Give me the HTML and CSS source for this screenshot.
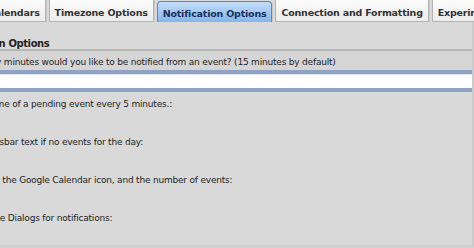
FILE: index.html
```html
<!DOCTYPE html>
<html>
<head>
  <meta charset="UTF-8">
  <title>Notification Options</title>
  <link rel="stylesheet" href="styles.css">
</head>
<body>
  <div class="prefs">
    <ul class="tabs">
      <li class="tab">Calendars</li>
      <li class="tab">Timezone Options</li>
      <li class="tab active">Notification Options</li>
      <li class="tab">Connection and Formatting</li>
      <li class="tab">Experimental</li>
    </ul>

    <div class="pane">
      <h2 class="pane_title">Notification Options</h2>

      <div class="question"><span class="question_text">How many minutes would you like to be notified from an event? (15 minutes by default)</span></div>
      <div class="field"><input type="text" class="field_input"></div>

      <div class="option">Show the time of a pending event every 5 minutes.:</div>
      <div class="option status">Display statusbar text if no events for the day:</div>
      <div class="option">Display only the Google Calendar icon, and the number of events:</div>
      <div class="option">Use Separate Dialogs for notifications:</div>
    </div>
  </div>
</body>
</html>
```

FILE: styles.css
```css
html, body {
  margin: 0;
  padding: 0;
  overflow: hidden;
}
body {
  width: 474px;
  height: 248px;
  background: #d9d9d9;
  font-family: "DejaVu Sans", sans-serif;
  font-size: 9px;
  letter-spacing: -0.2px;
  color: #1e1e1e;
}

/* tab row */
.tabs {
  display: flex;
  gap: 3px;
  margin: 0 0 0 -18px;
  padding: 0;
  list-style: none;
  height: 22px;
}
  .tab {
    box-sizing: border-box;
    height: 22px;
    padding: 7px 5px 0 5px;
    border: 1px solid #b3b3b3;
    border-top: none;
    background: linear-gradient(#fbfbfb, #ededed);
    font-weight: bold;
    font-size: 9.5px;
    color: #333;
    white-space: nowrap;
    box-shadow: 1px 0 0 #c9c9c9;
  }
  .tab.active {
    margin-top: 1px;
    height: 21px;
    padding-top: 6px;
    background: linear-gradient(#c4ddf8, #84b5eb);
    border: 1px solid #5a85c2;
    border-bottom: none;
    border-radius: 4px 4px 0 0;
    color: #16305a;
  }

/* pane */
.pane {
  box-sizing: border-box;
  height: 226px;
  border-right: 2px solid #cbcbcb;
  border-bottom: 3px solid #d0d0d0;
  background: #d9d9d9;
}
  .option {
    margin-left: -53px;
  }
  .option.status {
    margin-left: -57px;
  }
  .pane_title {
    margin: 0 0 0 -56px;
    padding: 16px 0 0 0;
    height: 11px;
    line-height: 12px;
    font-size: 10px;
    font-weight: bold;
    letter-spacing: -0.4px;
    color: #222;
    border-bottom: 2px solid #b7b7b7;
  }
  .question {
    height: 16px;
    padding-top: 3px;
    line-height: 16px;
    background: #d5d5d5;
    white-space: nowrap;
  }
    .question_text {
      margin-left: -45px;
    }
  .field {
    border-top: 4px solid #8fa2c3;
    border-bottom: 4px solid #8fa2c3;
    box-shadow: inset 0 1px 0 #dfe6f0;
    height: 14px;
    background: #fff;
  }
  .field_input {
    display: block;
    width: 100%;
    height: 14px;
    padding: 0;
    border: none;
    outline: none;
    background: transparent;
  }
  .option {
    height: 38px;
    line-height: 24px;
    white-space: nowrap;
  }
```
